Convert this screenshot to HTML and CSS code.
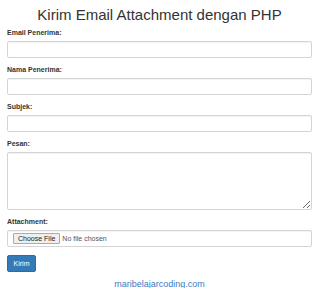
FILE: index.html
```html
<!DOCTYPE html>
<html lang="id">
<head>
    <meta charset="UTF-8">
    <meta name="viewport" content="width=device-width, initial-scale=1.0">
    <title>Kirim Email Attachment dengan PHP</title>
    <link rel="stylesheet" href="styles.css">
</head>
<body>
    <div class="container">
        <h2 class="title">Kirim Email Attachment dengan PHP</h2>
        <form>
            <div class="form-group">
                <label for="email">Email Penerima:</label>
                <input type="email" id="email" class="form-control">
            </div>
            <div class="form-group">
                <label for="nama">Nama Penerima:</label>
                <input type="text" id="nama" class="form-control">
            </div>
            <div class="form-group">
                <label for="subjek">Subjek:</label>
                <input type="text" id="subjek" class="form-control">
            </div>
            <div class="form-group">
                <label for="pesan">Pesan:</label>
                <textarea id="pesan" class="form-control pesan"></textarea>
            </div>
            <div class="form-group">
                <label for="attachment">Attachment:</label>
                <div class="form-control file-box">
                    <span class="file-btn">Choose File</span>
                    <span class="file-name">No file chosen</span>
                </div>
            </div>
            <button type="button" class="btn-kirim">Kirim</button>
        </form>
        <p class="footer"><a href="#">maribelajarcoding.com</a></p>
    </div>
</body>
</html>
```
FILE: styles.css
```css
body {
    margin: 0;
    font-family: "Liberation Sans", Arial, sans-serif;
    color: #333;
    background-color: #fff;
}
.container {
    padding: 0 8px 0 7px;
}
.title {
    margin: 5px 0 3px;
    font-size: 15px;
    font-weight: normal;
    line-height: 20px;
    text-align: center;
    color: #333;
}
.form-group {
    margin-bottom: 7px;
}
label {
    display: block;
    margin-bottom: 3px;
    font-size: 7px;
    font-weight: bold;
    line-height: 10px;
}
.form-control {
    display: block;
    box-sizing: border-box;
    width: 100%;
    height: 17px;
    margin: 0;
    padding: 2px 5px;
    font-family: inherit;
    font-size: 7px;
    color: #555;
    background-color: #fff;
    border: 1px solid #d4d4d4;
    border-radius: 2px;
    box-shadow: inset 0 1px 1px rgba(0, 0, 0, 0.05);
}
.pesan {
    height: 58px;
}
.file-box {
    display: flex;
    align-items: center;
    gap: 2px;
    padding: 0 5px;
}
.file-btn {
    padding: 0 4px;
    height: 9px;
    line-height: 9px;
    font-size: 7px;
    color: #222;
    background-color: #efefef;
    border: 1px solid #aaa;
    border-radius: 1px;
}
.file-name {
    font-size: 7px;
    color: #555;
}
.btn-kirim {
    display: block;
    margin-top: 8px;
    width: 29px;
    height: 17px;
    padding: 0;
    font-family: inherit;
    font-size: 7px;
    color: #fff;
    background-color: #337ab7;
    border: 1px solid #2e6da4;
    border-radius: 2px;
}
.footer {
    margin: 7px 0 0;
    font-size: 9px;
    line-height: 11px;
    text-align: center;
}
.footer a {
    color: #3a7bbf;
    text-decoration: none;
}
```
